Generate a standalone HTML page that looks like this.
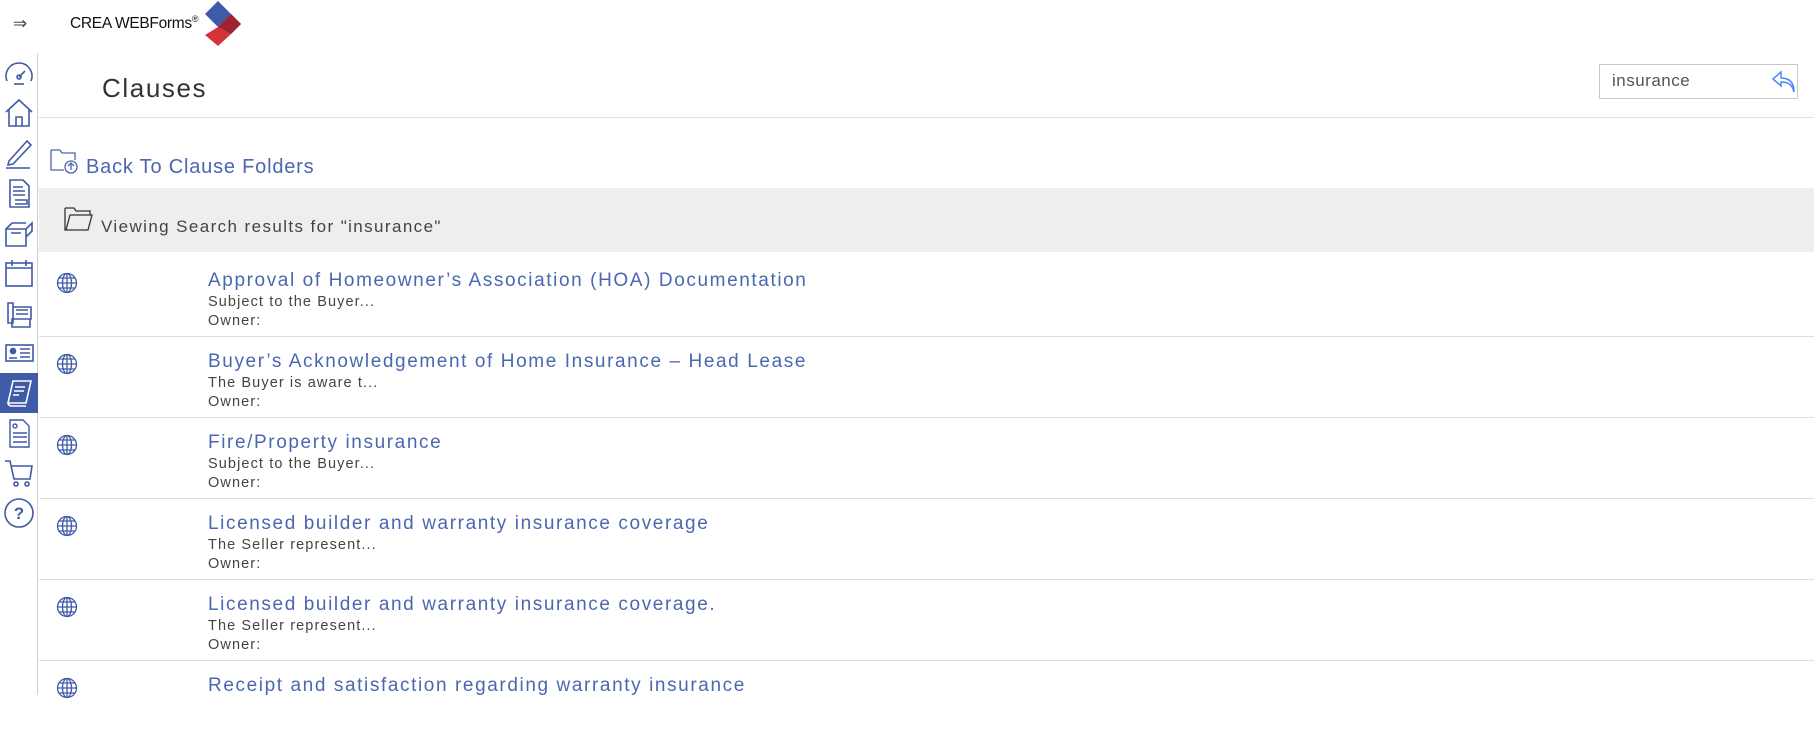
<!DOCTYPE html>
<html><head><meta charset="utf-8"><style>
*{margin:0;padding:0;box-sizing:border-box}
body{width:1814px;height:695px;overflow:hidden;background:#fff;font-family:"Liberation Sans",sans-serif;position:relative}
.abs{position:absolute}
.side{left:0;top:53px;width:38px;height:642px;border-right:1px solid #cfcfcf}
.ic{position:absolute;left:3px;width:32px;height:32px}
.title{left:102px;top:73px;font-size:26px;color:#333;letter-spacing:1.6px}
.hr{left:38px;top:117px;width:1776px;height:1px;background:#e2e2e2}
.back{left:86px;top:156px;font-size:20px;color:#4a67b0;letter-spacing:0.8px}
.band{left:39px;top:188px;width:1775px;height:64px;background:#eeeeee}
.view{left:101px;top:217px;font-size:17px;color:#444;letter-spacing:1.4px}
.row{position:absolute;left:39px;width:1775px;height:81px;border-bottom:1px solid #dedede}
.row .t{position:absolute;left:169px;top:14px;font-size:19px;color:#4a67b0;letter-spacing:1.6px;white-space:nowrap}
.row .s{position:absolute;left:169px;top:38px;font-size:14.5px;color:#444;letter-spacing:1.1px}
.row .o{position:absolute;left:169px;top:57px;font-size:14.5px;color:#444;letter-spacing:1.1px}
.row svg{position:absolute;left:17px;top:16px}
.search{left:1599px;top:64px;width:199px;height:35px;border:1px solid #c8c8c8;font-size:17px;color:#555;padding:6px 12px;letter-spacing:.5px}
</style></head><body>
<div class="abs" style="left:13px;top:14px;font-size:17px;color:#444">&#8658;</div>
<div class="abs" style="left:70px;top:14px;font-size:15.5px;color:#111;letter-spacing:-.3px">CREA WEBForms<sup style="font-size:9px">®</sup></div>
<svg class="abs" style="left:205px;top:1px" width="36" height="45" viewBox="0 0 36 45">
<polygon points="13,0 26,13 13,26 0,13" fill="#3f5ba8"/>
<polygon points="26,13 36,23 26,33 13,26" fill="#a32633"/>
<polygon points="13,26 26,33 13,45 0,34" fill="#d7323a"/>
<polygon points="13,26 26,13 36,23 26,33" fill="#9c2331"/>
</svg>
<div class="abs side">
<svg class="ic" style="top:4px" viewBox="0 0 32 32" fill="none" stroke="#3f5aa6" stroke-width="1.6"><path d="M4 24A13 13 0 1 1 28 24"/><path d="M16 20l6-6"/><circle cx="16" cy="20" r="2"/><path d="M11 27h10"/></svg>
<svg class="ic" style="top:44px" viewBox="0 0 32 32" fill="none" stroke="#3f5aa6" stroke-width="1.6"><path d="M3 15L16 3l13 12M6 13v16h20V13M13 29v-9h6v9"/></svg>
<svg class="ic" style="top:84px" viewBox="0 0 32 32" fill="none" stroke="#3f5aa6" stroke-width="1.6"><path d="M6 24L24 4l4 4L10 27l-5 1zM3 31h24"/></svg>
<svg class="ic" style="top:124px" viewBox="0 0 32 32" fill="none" stroke="#3f5aa6" stroke-width="1.6"><path d="M7 3h13l6 6v21H7zM10 10h10M10 14h12M10 18h12M12 23h12v4H12"/></svg>
<svg class="ic" style="top:164px" viewBox="0 0 32 32" fill="none" stroke="#3f5aa6" stroke-width="1.6"><path d="M3 12h20v17H3zM3 12l6-6h14M23 12l6-6v8l-6 6M8 16h10"/></svg>
<svg class="ic" style="top:204px" viewBox="0 0 32 32" fill="none" stroke="#3f5aa6" stroke-width="1.6"><rect x="3" y="6" width="26" height="23"/><path d="M3 11h26M9 3v6M23 3v6"/></svg>
<svg class="ic" style="top:244px" viewBox="0 0 32 32" fill="none" stroke="#3f5aa6" stroke-width="1.6"><path d="M5 6h5v20H5zM10 10h18v12H10zM13 13h12M13 17h12M9 22h18v8H9z"/></svg>
<svg class="ic" style="top:284px" viewBox="0 0 32 32" fill="none" stroke="#3f5aa6" stroke-width="1.6"><rect x="3" y="8" width="27" height="16"/><circle cx="10" cy="14" r="2.5" fill="#3f5aa6"/><path d="M6 21h8M17 12h10M17 16h10M17 20h10"/></svg>
<div style="position:absolute;left:0;top:320px;width:38px;height:40px;background:#3f5aa6"></div>
<svg class="ic" style="top:324px" viewBox="0 0 32 32" fill="none" stroke="#fff" stroke-width="1.6"><path d="M10 4h18l-5 22H5zM12 10h10M11 14h10M10 18h6M5 26c0 3 4 3 4 3h14"/></svg>
<svg class="ic" style="top:364px" viewBox="0 0 32 32" fill="none" stroke="#3f5aa6" stroke-width="1.4"><path d="M7 3h13l6 6v21H7zM10 16h14M10 20h14M10 25h14"/><circle cx="12" cy="9" r="2"/></svg>
<svg class="ic" style="top:404px" viewBox="0 0 32 32" fill="none" stroke="#3f5aa6" stroke-width="1.6"><path d="M2 4h5l4 18h16l2-13H9"/><circle cx="13" cy="27" r="2"/><circle cx="24" cy="27" r="2"/></svg>
<svg class="ic" style="top:444px" viewBox="0 0 32 32" fill="none" stroke="#3f5aa6" stroke-width="1.6"><circle cx="16" cy="16" r="14"/><text x="16" y="22" font-size="17" font-weight="bold" text-anchor="middle" fill="#3f5aa6" stroke="none" font-family="Liberation Sans">?</text></svg>
</div>
<div class="abs title">Clauses</div>
<div class="abs search">insurance</div>
<svg class="abs" style="left:1771px;top:70px" width="26" height="24" viewBox="0 0 26 24" fill="none" stroke="#4a8cf0" stroke-width="1.5"><path d="M10 2L2 9l8 7v-4c7 0 11 2 13 10 0-10-5-14-13-14z"/></svg>
<div class="abs hr"></div>
<svg class="abs" style="left:50px;top:147px" width="30" height="28" viewBox="0 0 30 28" fill="none" stroke="#4a67b0" stroke-width="1.3"><path d="M1 3h9l2 3h13v7M1 3v20h13"/><circle cx="21" cy="20" r="6"/><path d="M21 23v-6M18 19l3-3 3 3"/></svg>
<div class="abs back">Back To Clause Folders</div>
<div class="abs band"></div>
<svg class="abs" style="left:64px;top:206px" width="30" height="26" viewBox="0 0 30 26" fill="none" stroke="#333" stroke-width="1.3"><path d="M1 2h9l2 3h14v4M1 2v22h23l4-15H6L2 24"/></svg>
<div class="abs view">Viewing Search results for "insurance"</div>
<div class="row" style="top:256px"><svg width="22" height="22" viewBox="0 0 22 22" fill="none" stroke="#3f5aa6" stroke-width="1.3"><circle cx="11" cy="11" r="9.5"/><ellipse cx="11" cy="11" rx="4.5" ry="9.5"/><path d="M11 1.5v19M1.5 11h19M3 6h16M3 16h16"/></svg><div class="t">Approval of Homeowner’s Association (HOA) Documentation</div><div class="s">Subject to the Buyer...</div><div class="o">Owner:</div></div>
<div class="row" style="top:337px"><svg width="22" height="22" viewBox="0 0 22 22" fill="none" stroke="#3f5aa6" stroke-width="1.3"><circle cx="11" cy="11" r="9.5"/><ellipse cx="11" cy="11" rx="4.5" ry="9.5"/><path d="M11 1.5v19M1.5 11h19M3 6h16M3 16h16"/></svg><div class="t">Buyer’s Acknowledgement of Home Insurance – Head Lease</div><div class="s">The Buyer is aware t...</div><div class="o">Owner:</div></div>
<div class="row" style="top:418px"><svg width="22" height="22" viewBox="0 0 22 22" fill="none" stroke="#3f5aa6" stroke-width="1.3"><circle cx="11" cy="11" r="9.5"/><ellipse cx="11" cy="11" rx="4.5" ry="9.5"/><path d="M11 1.5v19M1.5 11h19M3 6h16M3 16h16"/></svg><div class="t">Fire/Property insurance</div><div class="s">Subject to the Buyer...</div><div class="o">Owner:</div></div>
<div class="row" style="top:499px"><svg width="22" height="22" viewBox="0 0 22 22" fill="none" stroke="#3f5aa6" stroke-width="1.3"><circle cx="11" cy="11" r="9.5"/><ellipse cx="11" cy="11" rx="4.5" ry="9.5"/><path d="M11 1.5v19M1.5 11h19M3 6h16M3 16h16"/></svg><div class="t">Licensed builder and warranty insurance coverage</div><div class="s">The Seller represent...</div><div class="o">Owner:</div></div>
<div class="row" style="top:580px"><svg width="22" height="22" viewBox="0 0 22 22" fill="none" stroke="#3f5aa6" stroke-width="1.3"><circle cx="11" cy="11" r="9.5"/><ellipse cx="11" cy="11" rx="4.5" ry="9.5"/><path d="M11 1.5v19M1.5 11h19M3 6h16M3 16h16"/></svg><div class="t">Licensed builder and warranty insurance coverage.</div><div class="s">The Seller represent...</div><div class="o">Owner:</div></div>
<div class="row" style="top:661px;border:none"><svg width="22" height="22" viewBox="0 0 22 22" fill="none" stroke="#3f5aa6" stroke-width="1.3"><circle cx="11" cy="11" r="9.5"/><ellipse cx="11" cy="11" rx="4.5" ry="9.5"/><path d="M11 1.5v19M1.5 11h19M3 6h16M3 16h16"/></svg><div class="t">Receipt and satisfaction regarding warranty insurance</div></div>
</body></html>
